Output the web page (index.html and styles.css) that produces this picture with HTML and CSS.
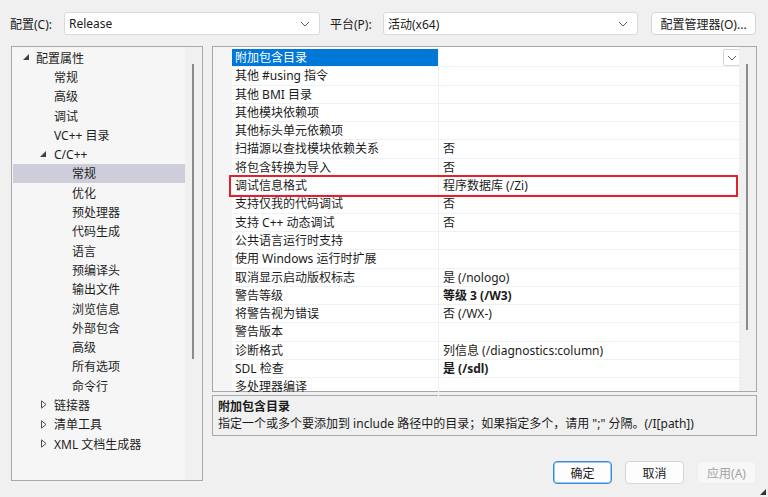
FILE: index.html
```html
<!DOCTYPE html>
<html lang="zh-CN">
<head>
  <meta charset="UTF-8" />
  <title>属性页</title>
  <link rel="stylesheet" href="styles.css">
</head>
<body>
  <div class="dialog">
    <div class="topbar">
      <label class="top-label">配置(C):</label>
      <div class="combo combo-config">
        <span>Release</span>
        <svg class="chev" width="10" height="6" viewBox="0 0 10 6"><path d="M1 1 L5 5 L9 1" fill="none" stroke="#606060" stroke-width="1"/></svg>
      </div>
      <label class="top-label platform">平台(P):</label>
      <div class="combo combo-platform">
        <span>活动(x64)</span>
        <svg class="chev" width="10" height="6" viewBox="0 0 10 6"><path d="M1 1 L5 5 L9 1" fill="none" stroke="#606060" stroke-width="1"/></svg>
      </div>
      <button type="button" class="btn btn-manager">配置管理器(O)...</button>
    </div>

    <div class="main">
      <div class="tree">
        <ul class="tree-list">
          <li class="lvl1"><svg class="tri" width="7" height="7" viewBox="0 0 7 7"><path d="M6 0 L6 6 L0 6 Z" fill="#404040"/></svg>配置属性</li>
          <li class="lvl2">常规</li>
          <li class="lvl2">高级</li>
          <li class="lvl2">调试</li>
          <li class="lvl2">VC++ 目录</li>
          <li class="lvl2 parent"><svg class="tri" width="7" height="7" viewBox="0 0 7 7"><path d="M6 0 L6 6 L0 6 Z" fill="#404040"/></svg>C/C++</li>
          <li class="lvl3 selected">常规</li>
          <li class="lvl3">优化</li>
          <li class="lvl3">预处理器</li>
          <li class="lvl3">代码生成</li>
          <li class="lvl3">语言</li>
          <li class="lvl3">预编译头</li>
          <li class="lvl3">输出文件</li>
          <li class="lvl3">浏览信息</li>
          <li class="lvl3">外部包含</li>
          <li class="lvl3">高级</li>
          <li class="lvl3">所有选项</li>
          <li class="lvl3">命令行</li>
          <li class="lvl2 parent closed"><svg class="tri" width="6" height="9" viewBox="0 0 6 9"><path d="M0.5 0.8 L5 4.5 L0.5 8.2 Z" fill="none" stroke="#505050" stroke-width="1"/></svg>链接器</li>
          <li class="lvl2 parent closed"><svg class="tri" width="6" height="9" viewBox="0 0 6 9"><path d="M0.5 0.8 L5 4.5 L0.5 8.2 Z" fill="none" stroke="#505050" stroke-width="1"/></svg>清单工具</li>
          <li class="lvl2 parent closed"><svg class="tri" width="6" height="9" viewBox="0 0 6 9"><path d="M0.5 0.8 L5 4.5 L0.5 8.2 Z" fill="none" stroke="#505050" stroke-width="1"/></svg>XML 文档生成器</li>
        </ul>
        <div class="vscroll tree-scroll"><div class="thumb"></div></div>
      </div>

      <div class="right">
        <div class="grid">
          <div class="gutter"></div>
          <div class="rows">
            <div class="row selected"><span class="name">附加包含目录</span><span class="val"><span class="drop"><svg width="10" height="6" viewBox="0 0 10 6"><path d="M1 1 L5 5 L9 1" fill="none" stroke="#606060" stroke-width="1"/></svg></span></span></div>
            <div class="row"><span class="name">其他 #using 指令</span><span class="val"></span></div>
            <div class="row"><span class="name">其他 BMI 目录</span><span class="val"></span></div>
            <div class="row"><span class="name">其他模块依赖项</span><span class="val"></span></div>
            <div class="row"><span class="name">其他标头单元依赖项</span><span class="val"></span></div>
            <div class="row"><span class="name">扫描源以查找模块依赖关系</span><span class="val">否</span></div>
            <div class="row"><span class="name">将包含转换为导入</span><span class="val">否</span></div>
            <div class="row marked"><span class="name">调试信息格式</span><span class="val">程序数据库 (/Zi)</span></div>
            <div class="row"><span class="name">支持仅我的代码调试</span><span class="val">否</span></div>
            <div class="row"><span class="name">支持 C++ 动态调试</span><span class="val">否</span></div>
            <div class="row"><span class="name">公共语言运行时支持</span><span class="val"></span></div>
            <div class="row"><span class="name">使用 Windows 运行时扩展</span><span class="val"></span></div>
            <div class="row"><span class="name">取消显示启动版权标志</span><span class="val">是 (/nologo)</span></div>
            <div class="row"><span class="name">警告等级</span><span class="val bold">等级 3 (/W3)</span></div>
            <div class="row"><span class="name">将警告视为错误</span><span class="val">否 (/WX-)</span></div>
            <div class="row"><span class="name">警告版本</span><span class="val"></span></div>
            <div class="row"><span class="name">诊断格式</span><span class="val">列信息 (/diagnostics:column)</span></div>
            <div class="row"><span class="name">SDL 检查</span><span class="val bold">是 (/sdl)</span></div>
            <div class="row"><span class="name">多处理器编译</span><span class="val"></span></div>
          </div>
          <div class="vscroll grid-scroll"><div class="thumb"></div></div>
          <div class="highlight"></div>
        </div>
        <div class="desc">
          <div class="desc-title">附加包含目录</div>
          <div class="desc-text">指定一个或多个要添加到 include 路径中的目录；如果指定多个，请用 ";" 分隔。(/I[path])</div>
        </div>
        <div class="footer">
          <button type="button" class="btn btn-ok">确定</button>
          <button type="button" class="btn">取消</button>
          <button type="button" class="btn btn-disabled">应用(A)</button>
        </div>
      </div>
    </div>
    <div class="grip"></div>
  </div>
</body>
</html>
```

FILE: styles.css
```css
* {
  box-sizing: border-box;
}

body {
  margin: 0;
  background-color: #f0f0f0;
  font-family: "Segoe UI", "Noto Sans", "Noto Sans CJK SC", sans-serif;
  font-size: 12px;
  color: #1b1b1b;
}

.dialog {
  position: relative;
  width: 768px;
  height: 497px;
  overflow: hidden;
}

/* top row with the two combos */
.topbar {
  display: flex;
  align-items: center;
  height: 23px;
  margin-top: 12px;
  padding-left: 10px;
}
.top-label {
  width: 54px;
  font-size: 12px;
}
.top-label.platform {
  width: 53px;
  margin-left: 10px;
}
.combo {
  display: flex;
  align-items: center;
  justify-content: space-between;
  height: 23px;
  padding: 0 9px 0 4px;
  background-color: #fff;
  border: 1px solid #dadada;
  border-radius: 3px;
}
.combo-config {
  width: 256px;
}
.combo-platform {
  width: 255px;
}
.chev {
  display: block;
}

.btn {
  font-family: inherit;
  font-size: 12px;
  color: #1b1b1b;
  background-color: #fdfdfd;
  border: 1px solid #d6d6d6;
  border-radius: 4px;
  height: 23px;
  padding: 0;
}
.btn-manager {
  width: 105px;
  margin-left: 13px;
}

/* main split */
.main {
  display: flex;
  margin-top: 11px;
  padding-left: 11px;
}

.tree {
  position: relative;
  width: 192px;
  height: 435px;
  background-color: #f6f6f6;
  border: 1px solid #a8a8a8;
}
.tree-list {
  list-style: none;
  margin: 0;
  padding: 1px 0 0 1px;
  width: 173px;
}
.tree-list li {
  display: flex;
  align-items: center;
  height: 19.3px;
  white-space: nowrap;
  color: #1e1e1e;
}
.tree-list li.lvl1 {
  padding-left: 10px;
}
.tree-list li.lvl2 {
  padding-left: 41px;
}
.tree-list li.lvl2.parent {
  padding-left: 27px;
}
.tree-list li.lvl2.parent.closed {
  padding-left: 28px;
}
.tree-list li.lvl3 {
  padding-left: 59px;
}
.tree-list li.selected {
  background-color: #cdced9;
}
.tri {
  display: block;
  margin-right: 6px;
}
.tree-list li.lvl2.parent .tri {
  margin-right: 7px;
}

.vscroll {
  position: absolute;
  top: 0;
  right: 0;
  bottom: 0;
  width: 17px;
  background-color: #f0f0f0;
}
.vscroll .thumb {
  position: absolute;
  left: 7px;
  width: 2px;
  background-color: #8b8b8b;
}
.tree-scroll .thumb {
  top: 17px;
  height: 295px;
}

.right {
  display: flex;
  flex-direction: column;
  margin-left: 9px;
}

.grid {
  position: relative;
  display: flex;
  width: 545px;
  height: 346px;
  background-color: #fff;
  border: 1px solid #a8a8a8;
}
.gutter {
  width: 19px;
  background-color: #f5f5f5;
}
.rows {
  width: 508px;
  padding-top: 2px;
}
.row {
  display: flex;
  height: 18.3px;
  border-bottom: 1px solid #eef1f6;
  line-height: 17px;
}
.row .name {
  width: 207px;
  padding-left: 3px;
  border-right: 1px solid #eef1f6;
  white-space: nowrap;
  overflow: hidden;
}
.row .val {
  position: relative;
  flex: 1;
  padding-left: 4px;
  white-space: nowrap;
}
.row .val.bold {
  font-weight: bold;
}
.row.selected .name {
  background-color: #0078d7;
  color: #fff;
}
.drop {
  position: absolute;
  right: 0;
  top: 0;
  width: 17px;
  height: 17px;
  border: 1px solid #d6d6d6;
  border-radius: 2px;
  background-color: #fff;
  display: flex;
  align-items: center;
  justify-content: center;
}
.grid-scroll .thumb {
  top: 17px;
  height: 266px;
}

/* red annotation frame */
.highlight {
  position: absolute;
  left: 16px;
  top: 128px;
  width: 509px;
  height: 22px;
  border: 2px solid #e3202c;
  pointer-events: none;
}

.desc {
  width: 545px;
  height: 41px;
  margin-top: 3px;
  padding: 2px 5px;
  border: 1px solid #a8a8a8;
  background-color: #f0f0f0;
}
.desc-title {
  font-weight: bold;
  line-height: 17px;
}
.desc-text {
  line-height: 17px;
  white-space: nowrap;
}

.footer {
  display: flex;
  justify-content: flex-end;
  gap: 13px;
  margin-top: 25px;
  padding-right: 1px;
}
.footer .btn {
  width: 59px;
  height: 23px;
}
.btn-ok {
  border: 1px solid #3a8bd8;
  box-shadow: inset 0 0 0 1px #9fc7ee;
}
.btn-disabled {
  color: #a3a3a3;
  background-color: #f7f7f7;
  border-color: #ededed;
}

.grip {
  position: absolute;
  right: 2px;
  bottom: 2px;
  width: 0;
  height: 0;
  border-left: 6px solid transparent;
  border-bottom: 6px solid #333;
}
```
